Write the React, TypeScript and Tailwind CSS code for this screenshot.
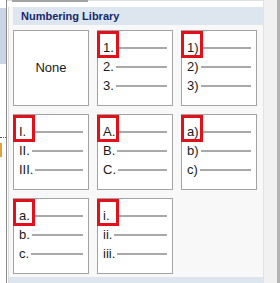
import React from "react";

type CellDef = { labels: string[] } | null;

const cells: CellDef[] = [
  null,
  { labels: ["1.", "2.", "3."] },
  { labels: ["1)", "2)", "3)"] },
  { labels: ["I.", "II.", "III."] },
  { labels: ["A.", "B.", "C."] },
  { labels: ["a)", "b)", "c)"] },
  { labels: ["a.", "b.", "c."] },
  { labels: ["i.", "ii.", "iii."] },
];

function ListCell({ labels }: { labels: string[] }) {
  return (
    <div className="relative w-[76px] h-[76px] border border-[#a3a3a3] bg-white pt-[7px] pl-[5px] pr-[5px]">
      {labels.map((l, i) => (
        <div key={i} className="flex items-center h-[19px]">
          <span className="relative z-10 text-[13px] leading-[19px] text-[#1a1a1a] whitespace-nowrap">{l}</span>
          <div className="flex-1 h-[2px] bg-[#a9a9a9] ml-[2px]" />
        </div>
      ))}
      <div className="absolute left-[-1px] top-[0px] w-[22px] h-[27px] border-[3px] border-[#e3101a] bg-white" />
    </div>
  );
}

export default function App() {
  return (
    <div
      className="w-[280px] h-[283px] flex bg-white overflow-hidden"
      style={{ fontFamily: '"Liberation Sans", Arial, sans-serif' }}
    >
      {/* left underlying strip */}
      <div className="relative w-[6px] h-full bg-white">
        <div className="absolute left-0 top-[8px] w-[6px] h-[56px] bg-[#c8d5e5]" />
        <div className="absolute left-0 top-[137px] w-[6px] h-[1px] border-t border-dotted border-[#555]" />
        <div className="absolute left-0 top-[143px] w-[2px] h-[14px] bg-[#e0a040]" />
      </div>
      <div className="w-px h-full bg-[#8a8a8a]" />
      {/* main panel */}
      <div className="w-[256px] h-full flex flex-col bg-white">
        <div className="relative h-[7px] bg-white">
          <div className="absolute left-0 top-0 w-full h-px bg-[#dedede]" />
          <div className="absolute left-[5px] top-0 w-[76px] h-[2px] bg-[#a2a2a2]" />
        </div>
        <div className="flex-1 flex flex-col ml-[1px] border-l border-[#dadada] bg-[#f8f8f8]">
          <div className="h-[18px] ml-[4px] bg-[#dde6ef] flex items-center pl-[8px]">
            <span className="text-[11px] font-bold text-[#15286b] leading-none">Numbering Library</span>
          </div>
          <div className="flex-1 pt-[5px] pl-[4px]">
            <div className="grid grid-cols-[76px_76px_76px] gap-[8px]">
              {cells.map((c, i) =>
                c ? (
                  <ListCell key={i} labels={c.labels} />
                ) : (
                  <div
                    key={i}
                    className="w-[76px] h-[76px] border border-[#a3a3a3] bg-white flex items-center justify-center text-[13px] text-[#1a1a1a]"
                  >
                    None
                  </div>
                )
              )}
            </div>
          </div>
          <div className="h-[6px] bg-[#dde6ef]" />
        </div>
      </div>
      {/* right strip */}
      <div className="flex-1 h-full flex">
        <div className="w-px h-full bg-[#e2e2e2]" />
        <div className="flex-1 h-full bg-[#f1f1f1]" />
        <div className="w-[3px] h-full bg-[#b4b4b4]" />
      </div>
    </div>
  );
}
